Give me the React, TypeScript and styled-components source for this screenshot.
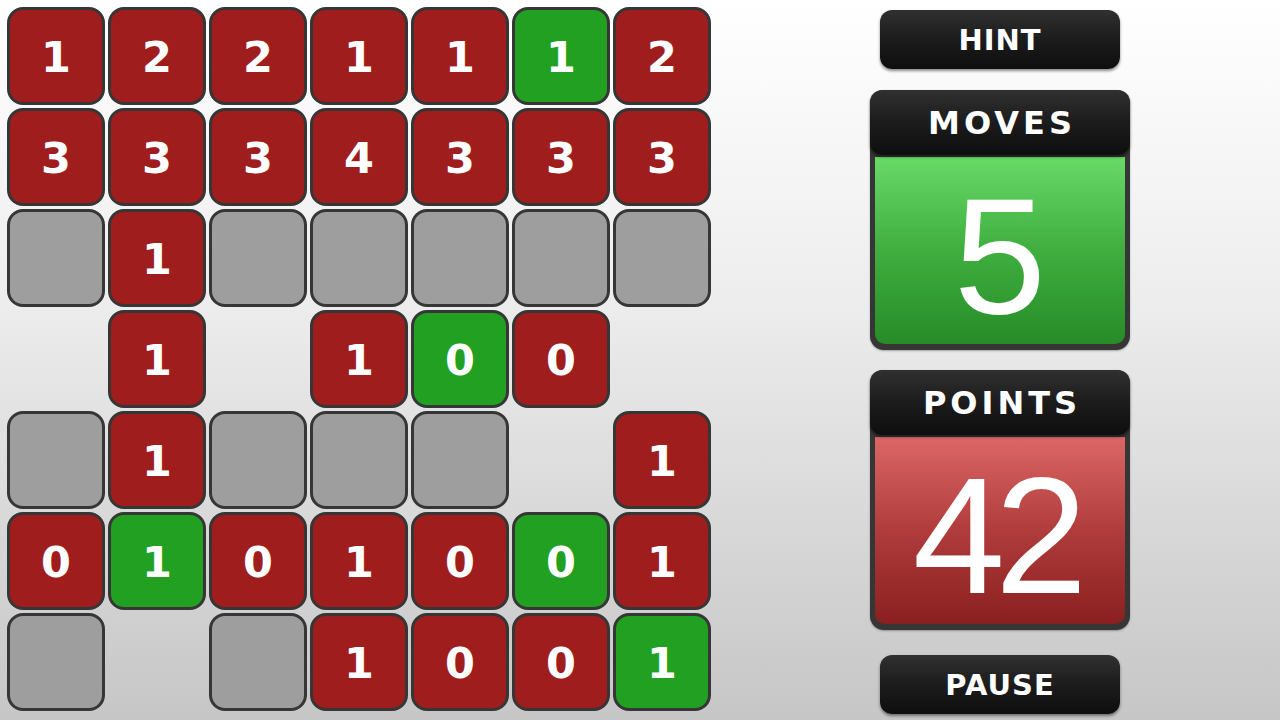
import React from "react";
import styled, { createGlobalStyle, css } from "styled-components";

type Kind = "red" | "green" | "grey" | "empty";
type Cell = { kind: Kind; value?: number };

const r = (value: number): Cell => ({ kind: "red", value });
const g = (value: number): Cell => ({ kind: "green", value });
const x: Cell = { kind: "grey" };
const _: Cell = { kind: "empty" };

const board: Cell[][] = [
  [r(1), r(2), r(2), r(1), r(1), g(1), r(2)],
  [r(3), r(3), r(3), r(4), r(3), r(3), r(3)],
  [x, r(1), x, x, x, x, x],
  [_, r(1), _, r(1), g(0), r(0), _],
  [x, r(1), x, x, x, _, r(1)],
  [r(0), g(1), r(0), r(1), r(0), g(0), r(1)],
  [x, _, x, r(1), r(0), r(0), g(1)],
];

const App: React.FC = () => {
  return (
    <>
      <GlobalStyle />
      <Page>
        <Board>
          {board.flat().map((cell, index) => (
            <Tile key={index} $kind={cell.kind}>
              {cell.value}
            </Tile>
          ))}
        </Board>

        <Side>
          <DarkButton>HINT</DarkButton>
          <Panel>
            <PanelHeader>MOVES</PanelHeader>
            <PanelBody $tone="green">5</PanelBody>
          </Panel>
          <Panel>
            <PanelHeader>POINTS</PanelHeader>
            <PanelBody $tone="red">42</PanelBody>
          </Panel>
          <DarkButton>PAUSE</DarkButton>
        </Side>
      </Page>
    </>
  );
};

const GlobalStyle = createGlobalStyle`
  html, body {
    margin: 0;
    padding: 0;
    height: 100%;
  }
  body {
    background: linear-gradient(to bottom, #ffffff 0%, #eeeeee 40%, #c6c6c6 100%);
    font-family: "DejaVu Sans", Verdana, sans-serif;
  }
`;

const Page = styled.div`
  display: flex;
  align-items: flex-start;
  width: 1280px;
  height: 720px;
  box-sizing: border-box;
  padding: 7px;
  overflow: hidden;
`;

const Board = styled.div`
  display: grid;
  grid-template-columns: repeat(7, 98px);
  grid-auto-rows: 98px;
  gap: 3px;
`;

const tileColors: Record<Kind, string> = {
  red: "#9f1d1d",
  green: "#22a022",
  grey: "#9e9e9e",
  empty: "transparent",
};

const Tile = styled.div<{ $kind: Kind }>`
  box-sizing: border-box;
  display: flex;
  align-items: center;
  justify-content: center;
  padding-top: 2px;
  border-radius: 16px;
  background: ${(p) => tileColors[p.$kind]};
  border: ${(p) => (p.$kind === "empty" ? "none" : "3px solid #363636")};
  color: #fff;
  font-family: "DejaVu Sans", Verdana, sans-serif;
  font-weight: bold;
  font-size: 43px;
  line-height: 1;
`;

const Side = styled.div`
  display: flex;
  flex-direction: column;
  align-items: center;
  width: 260px;
  margin-left: 159px;
  padding-top: 3px;
`;

const darkGradient = css`
  background: linear-gradient(to bottom, #303030 0%, #1c1c1c 50%, #0e0e0e 100%);
  box-shadow: 0 2px 3px rgba(0, 0, 0, 0.45);
  color: #fff;
  font-family: "DejaVu Sans", Verdana, sans-serif;
  font-weight: bold;
`;

const DarkButton = styled.div`
  ${darkGradient};
  width: 240px;
  height: 59px;
  box-sizing: border-box;
  border-radius: 12px;
  display: flex;
  align-items: center;
  justify-content: center;
  font-size: 29px;
  letter-spacing: 1px;
  padding-top: 1px;

  &:first-child {
    margin-bottom: 21px;
  }

  &:last-child {
    margin-top: 25px;
  }
`;

const Panel = styled.div`
  width: 260px;
  height: 260px;
  box-sizing: border-box;
  background: #363636;
  border-radius: 14px;
  padding: 0 5px 6px;
  display: flex;
  flex-direction: column;
  box-shadow: 0 1px 2px rgba(0, 0, 0, 0.3);

  & + & {
    margin-top: 20px;
  }
`;

const PanelHeader = styled.div`
  ${darkGradient};
  position: relative;
  z-index: 1;
  margin: 0 -5px;
  height: 65px;
  border-radius: 12px;
  display: flex;
  align-items: center;
  justify-content: center;
  font-size: 32px;
  letter-spacing: 4px;
  padding-left: 4px;
`;

const bodyTones = {
  green: "linear-gradient(to bottom, #68da68 0%, #3fae3f 50%, #278c27 100%)",
  red: "linear-gradient(to bottom, #dc6666 0%, #b03c3c 50%, #8a1f1f 100%)",
};

const PanelBody = styled.div<{ $tone: "green" | "red" }>`
  flex: 1;
  margin-top: 2px;
  border-radius: 0 0 10px 10px;
  background: ${(p) => bodyTones[p.$tone]};
  display: flex;
  align-items: center;
  justify-content: center;
  padding-top: 10px;
  padding-right: 10px;
  color: #fff;
  font-family: "Liberation Sans", Arial, sans-serif;
  font-size: 166px;
  letter-spacing: -10px;
  line-height: 1;
`;

export default App;
